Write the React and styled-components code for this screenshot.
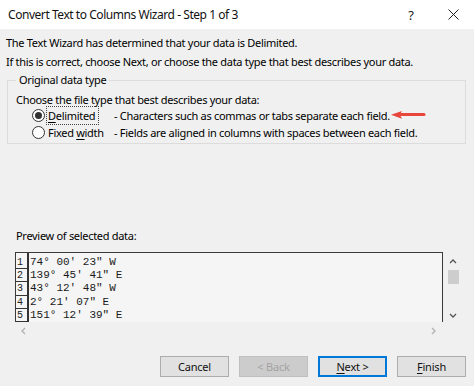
import React from 'react';
import styled, { createGlobalStyle } from 'styled-components';

const GlobalStyle = createGlobalStyle`
  html, body {
    margin: 0;
    padding: 0;
    background: #f0f0f0;
  }
  body {
    font-family: "Noto Sans", "Open Sans", sans-serif;
    color: #000;
  }
`;

const Dialog = styled.div`
  width: 474px;
  height: 386px;
  display: flex;
  flex-direction: column;
  background: #f0f0f0;
  overflow: hidden;
`;

const TitleBar = styled.div`
  height: 29px;
  flex: none;
  display: flex;
  align-items: center;
  background: #fff;
  padding-left: 8px;
`;

const Title = styled.div`
  flex: 1;
  font-size: 12px;
  letter-spacing: -0.45px;
  color: #111;
`;

const TitleButton = styled.div`
  width: 42px;
  height: 29px;
  display: flex;
  align-items: center;
  justify-content: center;
  font-size: 13px;
  color: #222;
`;

const Body = styled.div`
  flex: 1;
  display: flex;
  flex-direction: column;
  padding: 4px 8px 0 6px;
  font-size: 11px;
  letter-spacing: -0.3px;
`;

const Intro = styled.div`
  line-height: 19px;
  white-space: nowrap;
`;

const GroupBox = styled.fieldset`
  margin: 2px 0 0 1px;
  padding: 7px 8px 2px 8px;
  border: 1px solid #dcdcdc;
  min-width: 0;
`;

const Legend = styled.legend`
  padding: 0 3px;
  margin-left: 0;
  line-height: 14px;
`;

const Prompt = styled.div`
  line-height: 14px;
  margin-top: -1px;
`;

const OptionRow = styled.div`
  display: flex;
  align-items: center;
  height: 17px;
  padding-left: 16px;
  white-space: nowrap;
`;

const Radio = styled.span`
  width: 11px;
  height: 11px;
  border: 1px solid #333;
  border-radius: 50%;
  background: #fff;
  display: flex;
  align-items: center;
  justify-content: center;
  flex: none;
  &::after {
    content: '';
    width: 7px;
    height: 7px;
    border-radius: 50%;
    background: ${p => (p.$checked ? '#333' : 'transparent')};
  }
`;

const OptionLabel = styled.span`
  width: 62px;
  margin-left: 3px;
  flex: none;
  display: flex;
`;

const FocusBox = styled.span`
  outline: 1px dotted #444;
  outline-offset: 0;
  padding: 1px 3px 1px 1px;
  margin-left: -1px;
`;

const Key = styled.span`
  text-decoration: underline;
  text-underline-offset: 2px;
`;

const Description = styled.span`
  margin-left: 4px;
  display: flex;
  align-items: center;
`;

const PreviewLabel = styled.div`
  margin: 85px 0 0 10px;
  line-height: 14px;
`;

const Preview = styled.div`
  margin: 9px 5px 0 9px;
  display: grid;
  grid-template-columns: 1fr 18px;
  grid-template-rows: 70px 18px;
  letter-spacing: 0;
`;

const Table = styled.div`
  display: flex;
  border: 1px solid #3a3a3a;
  border-bottom: none;
  background: #f5f5f5;
`;

const NumberColumn = styled.div`
  width: 11px;
  padding-top: 3px;
  border-right: 2px solid #333;
  display: flex;
  flex-direction: column;
`;

const NumberCell = styled.div`
  height: 12.2px;
  border-bottom: 1px solid #333;
  font-family: "Liberation Mono", monospace;
  font-size: 10px;
  line-height: 13px;
  padding-left: 1px;
  color: #222;
`;

const DataColumn = styled.div`
  padding: 3px 0 0 1px;
  font-family: "Liberation Mono", monospace;
  font-size: 11px;
  line-height: 13.2px;
  color: #1a1a1a;
  white-space: pre;
`;

const VScroll = styled.div`
  display: flex;
  flex-direction: column;
  align-items: center;
  padding: 6px 0 3px 2px;
`;

const Thumb = styled.div`
  width: 11px;
  height: 14px;
  margin-top: 5px;
  background: #cdcdcd;
`;

const HScroll = styled.div`
  display: flex;
  align-items: center;
  justify-content: space-between;
  padding: 0 6px 0 5px;
`;

const Footer = styled.div`
  display: flex;
  justify-content: flex-end;
  gap: 10px;
  margin-top: 16px;
`;

const Button = styled.button`
  width: 69px;
  height: 21px;
  box-sizing: border-box;
  font-family: inherit;
  font-size: 11px;
  letter-spacing: -0.2px;
  color: ${p => (p.disabled ? '#a3a3a3' : '#111')};
  background: ${p => (p.disabled ? '#cccccc' : '#e1e1e1')};
  border: ${p => (p.$primary ? '2px solid #0078d7' : p.disabled ? '1px solid #bfbfbf' : '1px solid #adadad')};
  padding: 0;
  border-radius: 0;
`;

const Chevron = ({ dir, color = '#555' }) => {
  const paths = {
    up: 'M1 5 L4 2 L7 5',
    down: 'M1 2 L4 5 L7 2',
    left: 'M5 1 L2 4 L5 7',
    right: 'M2 1 L5 4 L2 7',
  };
  const vertical = dir === 'up' || dir === 'down';
  return (
    <svg width={vertical ? 8 : 7} height={vertical ? 7 : 8} viewBox={vertical ? '0 0 8 7' : '0 0 7 8'}>
      <path d={paths[dir]} fill="none" stroke={color} strokeWidth="1.3" />
    </svg>
  );
};

const RedArrow = () => (
  <svg width="35" height="10" viewBox="0 0 35 10" style={{ marginLeft: 1 }}>
    <path d="M10 3.6 H33" stroke="#e8453c" strokeWidth="3" strokeLinecap="round" />
    <path d="M0 3.8 L11 0 L9 3.8 L11 7.8 Z" fill="#e8453c" />
  </svg>
);

const rows = [
  '74° 00\' 23" W',
  '139° 45\' 41" E',
  '43° 12\' 48" W',
  '2° 21\' 07" E',
  '151° 12\' 39" E',
];

export default function App() {
  return (
    <>
      <GlobalStyle />
      <Dialog>
        <TitleBar>
          <Title>Convert Text to Columns Wizard - Step 1 of 3</Title>
          <TitleButton>?</TitleButton>
          <TitleButton>
            <svg width="11" height="11" viewBox="0 0 11 11">
              <path d="M0.5 0.5 L10.5 10.5 M10.5 0.5 L0.5 10.5" stroke="#222" strokeWidth="1" />
            </svg>
          </TitleButton>
        </TitleBar>
        <Body>
          <Intro>The Text Wizard has determined that your data is Delimited.</Intro>
          <Intro>If this is correct, choose Next, or choose the data type that best describes your data.</Intro>
          <GroupBox>
            <Legend>Original data type</Legend>
            <Prompt>Choose the file type that best describes your data:</Prompt>
            <OptionRow>
              <Radio $checked />
              <OptionLabel>
                <FocusBox><Key>D</Key>elimited</FocusBox>
              </OptionLabel>
              <Description>
                - Characters such as commas or tabs separate each field.
                <RedArrow />
              </Description>
            </OptionRow>
            <OptionRow>
              <Radio />
              <OptionLabel>Fixed&nbsp;<Key>w</Key>idth</OptionLabel>
              <Description>- Fields are aligned in columns with spaces between each field.</Description>
            </OptionRow>
          </GroupBox>
          <PreviewLabel>Preview of selected data:</PreviewLabel>
          <Preview>
            <Table>
              <NumberColumn>
                {rows.map((_, i) => (
                  <NumberCell key={i}>{i + 1}</NumberCell>
                ))}
              </NumberColumn>
              <DataColumn>{rows.join('\n')}</DataColumn>
            </Table>
            <VScroll>
              <Chevron dir="up" />
              <Thumb />
              <div style={{ flex: 1 }} />
              <Chevron dir="down" />
            </VScroll>
            <HScroll>
              <Chevron dir="left" color="#b0b0b0" />
              <Chevron dir="right" color="#b0b0b0" />
            </HScroll>
          </Preview>
          <Footer>
            <Button>Cancel</Button>
            <Button disabled>&lt; Back</Button>
            <Button $primary><Key>N</Key>ext &gt;</Button>
            <Button><Key>F</Key>inish</Button>
          </Footer>
        </Body>
      </Dialog>
    </>
  );
}
